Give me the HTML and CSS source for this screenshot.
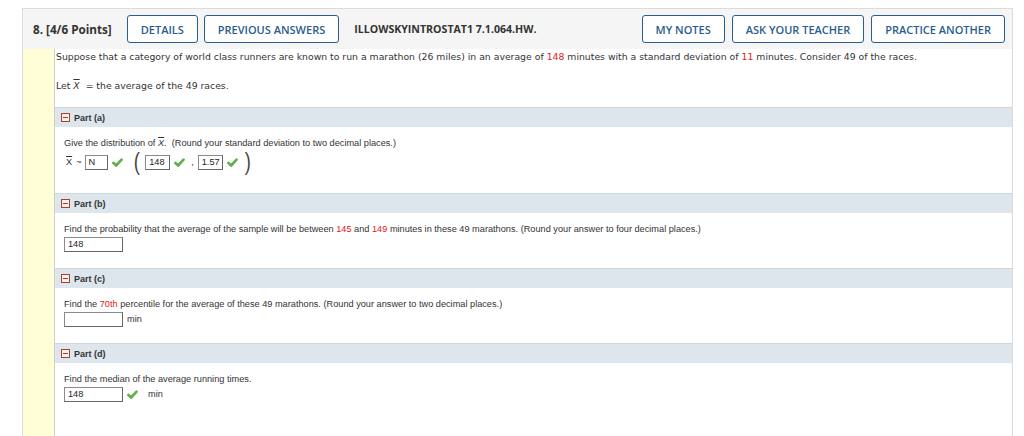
FILE: index.html
```html
<!DOCTYPE html>
<html>
<head>
<meta charset="utf-8">
<link rel="stylesheet" href="styles.css">
</head>
<body>
<div class="question">
  <div class="qhead">
    <span class="qnum">8. [4/6 Points]</span>
    <span class="btn">DETAILS</span>
    <span class="btn">PREVIOUS ANSWERS</span>
    <span class="qcode">ILLOWSKYINTROSTAT1 7.1.064.HW.</span>
    <span class="spacer"></span>
    <span class="btn">MY NOTES</span>
    <span class="btn">ASK YOUR TEACHER</span>
    <span class="btn">PRACTICE ANOTHER</span>
  </div>
  <div class="qbody">
    <div class="gutter"></div>
    <div class="content">
      <p class="qtext">Suppose that a category of world class runners are known to run a marathon (26 miles) in an average of <span class="red">148</span> minutes with a standard deviation of <span class="red">11</span> minutes. Consider 49 of the races.</p>
      <p class="qtext let">Let <span class="xbar it">X</span> &nbsp;= the average of the 49 races.</p>

      <div class="part">
        <div class="part-head"><span class="minus"></span>Part (a)</div>
        <div class="part-body">
          <p class="ptext">Give the distribution of <span class="xbar it">X</span>. &nbsp;(Round your standard deviation to two decimal places.)</p>
          <div class="dist">
            <span class="xbar">X</span><span class="tilde">~</span>
            <span class="inp tiny">N</span>
            <svg class="check" viewBox="0 0 12 10"><path d="M1.5 5.5 L4.5 8.3 L10.5 1.8" /></svg>
            <span class="paren">(</span>
            <span class="inp small">148</span>
            <svg class="check" viewBox="0 0 12 10"><path d="M1.5 5.5 L4.5 8.3 L10.5 1.8" /></svg>
            <span class="comma">,</span>
            <span class="inp small">1.57</span>
            <svg class="check" viewBox="0 0 12 10"><path d="M1.5 5.5 L4.5 8.3 L10.5 1.8" /></svg>
            <span class="paren close">)</span>
          </div>
        </div>
      </div>

      <div class="part">
        <div class="part-head"><span class="minus"></span>Part (b)</div>
        <div class="part-body">
          <p class="ptext">Find the probability that the average of the sample will be between <span class="red">145</span> and <span class="red">149</span> minutes in these 49 marathons. (Round your answer to four decimal places.)</p>
          <div class="row"><span class="inp">148</span></div>
        </div>
      </div>

      <div class="part">
        <div class="part-head"><span class="minus"></span>Part (c)</div>
        <div class="part-body">
          <p class="ptext">Find the <span class="red">70th</span> percentile for the average of these 49 marathons. (Round your answer to two decimal places.)</p>
          <div class="row"><span class="inp"></span><span class="unit">min</span></div>
        </div>
      </div>

      <div class="part">
        <div class="part-head"><span class="minus"></span>Part (d)</div>
        <div class="part-body">
          <p class="ptext">Find the median of the average running times.</p>
          <div class="row"><span class="inp">148</span><svg class="check" viewBox="0 0 12 10"><path d="M1.5 5.5 L4.5 8.3 L10.5 1.8" /></svg><span class="unit wide">min</span></div>
        </div>
      </div>
    </div>
  </div>
</div>
</body>
</html>
```

FILE: styles.css
```css
body {
  margin: 0;
  background: #ffffff;
}

.question {
  margin: 8px 0 0 22px;
  width: 989px;
  border: 1px solid #dcdcdc;
  border-bottom: none;
  height: 440px;
}

.qhead {
  display: flex;
  align-items: center;
  height: 40px;
  background: #f5f5f5;
  padding: 0 7px 0 10px;
  font-family: "Open Sans", sans-serif;
  font-size: 11px;
  color: #333333;
}

.qnum {
  font-weight: 700;
  font-size: 11.7px;
  margin-right: 15px;
}

.btn {
  display: flex;
  align-items: center;
  height: 26px;
  padding: 0 13px;
  border: 1px solid #2a5d8c;
  border-radius: 3px;
  color: #2a5d8c;
  font-weight: 600;
  background: #ffffff;
  margin-right: 6px;
}

.btn + .qcode {
  margin-left: 9px;
}

.qcode {
  font-weight: 700;
  font-size: 10.6px;
  color: #333333;
}

.spacer {
  flex: 1;
}

.qhead .btn:nth-last-child(-n+3) {
  margin-right: 0;
  margin-left: 7px;
}

.qbody {
  display: flex;
  height: 400px;
}

.gutter {
  width: 31px;
  background: #fefdd6;
  border-right: 1px solid #cfcfcf;
  flex: none;
}

.content {
  flex: 1;
}

.qtext {
  margin: 2px 0 0 1px;
  font-family: "DejaVu Sans", Verdana, sans-serif;
  font-size: 9.3px;
  line-height: 12px;
  color: #333333;
}

.qtext.let {
  margin-top: 17px;
  margin-bottom: 15px;
}

.red {
  color: #e02020;
}

.xbar {
  text-decoration: overline;
}

.it {
  font-style: italic;
}

.part-head {
  display: flex;
  align-items: center;
  height: 19px;
  border-top: 1px solid #cfd6dd;
  background: #dde5ed;
  padding-left: 6px;
  font-family: "Liberation Sans", Arial, sans-serif;
  font-size: 9px;
  font-weight: 700;
  color: #333333;
}

.minus {
  position: relative;
  width: 7px;
  height: 7px;
  border: 1px solid #a8402f;
  background: #f7eeee;
  margin-right: 4px;
}

.minus::after {
  content: "";
  position: absolute;
  left: 1px;
  right: 1px;
  top: 3px;
  height: 1px;
  background: #a8402f;
}

.part-body {
  padding: 10px 0 16px 9px;
  font-family: "Liberation Sans", Arial, sans-serif;
  font-size: 9.2px;
  color: #333333;
}

.ptext {
  margin: 0 0 1px 0;
  line-height: 12px;
}

.row {
  display: flex;
  align-items: center;
  height: 16px;
}

.inp {
  display: flex;
  align-items: center;
  box-sizing: border-box;
  width: 59px;
  height: 15px;
  border: 1px solid #8a8a8a;
  border-right-color: #666;
  border-bottom-color: #666;
  padding-left: 3px;
  background: #ffffff;
  color: #222222;
}

.inp.tiny {
  width: 23px;
}

.inp.small {
  width: 25px;
}

.unit {
  margin-left: 4px;
}

.unit.wide {
  margin-left: 7px;
}

.check {
  width: 11px;
  height: 9px;
  margin: 0 3px 0 4px;
  fill: none;
  stroke: #62b04a;
  stroke-width: 3;
  stroke-linecap: round;
  stroke-linejoin: round;
}

.dist {
  display: flex;
  align-items: center;
  height: 24px;
  margin-bottom: 3px;
}

.dist .xbar {
  margin: 0 4px 0 2px;
}

.tilde {
  margin-right: 3px;
}

.paren {
  font-family: "Liberation Sans", Arial, sans-serif;
  font-size: 23px;
  font-weight: 300;
  color: #444444;
  margin: 0 5px 0 7px;
  line-height: 24px;
  transform: scaleX(0.8);
}

.paren.close {
  margin-left: 3px;
}

.comma {
  margin: 0 4px 0 3px;
}
```
